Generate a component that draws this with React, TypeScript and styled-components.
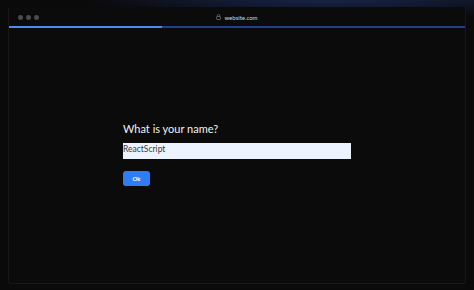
import React, { useState } from 'react';
import styled, { createGlobalStyle } from 'styled-components';

const GlobalStyle = createGlobalStyle`
  html, body {
    margin: 0;
    padding: 0;
    background: #0a0a0b;
  }
  * {
    box-sizing: border-box;
  }
`;

const App: React.FC = () => {
  const [name, setName] = useState('ReactScript');
  const progress = 33.5;

  return (
    <>
      <GlobalStyle />
      <Stage>
        <BrowserWindow>
          <TitleBar>
            <Dots>
              <Dot />
              <Dot />
              <Dot />
            </Dots>
            <Address>
              <LockIcon viewBox="0 0 10 12">
                <path d="M2.5 5V3.5a2.5 2.5 0 0 1 5 0V5" fill="none" stroke="#8a8a8a" strokeWidth="1.2" />
                <rect x="1.2" y="5" width="7.6" height="6" rx="1" fill="none" stroke="#8a8a8a" strokeWidth="1.2" />
              </LockIcon>
              website.com
            </Address>
          </TitleBar>
          <ProgressTrack>
            <ProgressFill style={{ width: `${progress}%` }} />
          </ProgressTrack>
          <Content>
            <Form onSubmit={(e) => e.preventDefault()}>
              <Question>What is your name?</Question>
              <NameInput value={name} onChange={(e) => setName(e.target.value)} />
              <OkButton type="submit">Ok</OkButton>
            </Form>
          </Content>
        </BrowserWindow>
      </Stage>
    </>
  );
};

const Stage = styled.div`
  width: 474px;
  height: 290px;
  padding: 7px 8px 6px 8px;
  background:
    radial-gradient(ellipse 260px 30px at 330px -8px, rgba(40, 70, 150, 0.55), rgba(10, 10, 11, 0) 100%),
    #0a0a0b;
  font-family: Lato, 'Open Sans', sans-serif;
`;

const BrowserWindow = styled.div`
  height: 100%;
  display: flex;
  flex-direction: column;
  background: #0b0b0c;
  border: 1px solid #18181a;
  border-top-color: #0b0b0c;
  border-radius: 3px;
`;

const TitleBar = styled.div`
  height: 18px;
  display: flex;
  align-items: center;
  position: relative;
  padding: 0 9px;
`;

const Dots = styled.div`
  display: flex;
  gap: 3px;
`;

const Dot = styled.span`
  width: 5px;
  height: 5px;
  border-radius: 50%;
  background: #4a4a4d;
`;

const Address = styled.div`
  position: absolute;
  left: 0;
  right: 0;
  font-size: 6px;
  color: #d6d6d8;
  display: flex;
  justify-content: center;
  align-items: center;
  gap: 3px;
`;

const LockIcon = styled.svg`
  width: 5px;
  height: 6px;
`;

const ProgressTrack = styled.div`
  height: 2px;
  background: #233d8f;
`;

const ProgressFill = styled.div`
  height: 100%;
  background: #4a8df0;
`;

const Content = styled.div`
  flex: 1;
  display: flex;
  align-items: center;
  justify-content: center;
  padding-bottom: 4px;
`;

const Form = styled.form`
  width: 228px;
  display: flex;
  flex-direction: column;
  align-items: flex-start;
`;

const Question = styled.h2`
  margin: 0 0 8px 0;
  font-size: 11px;
  line-height: 13px;
  font-weight: 400;
  color: #f2f2f2;
`;

const NameInput = styled.input`
  width: 100%;
  height: 16px;
  padding: 0 0 4px 0;
  border: none;
  outline: none;
  background: #eef4ff;
  color: #3a3a3a;
  font-family: Lato, 'Open Sans', sans-serif;
  font-size: 8.5px;
`;

const OkButton = styled.button`
  margin-top: 12px;
  width: 27px;
  height: 15px;
  border: none;
  border-radius: 3px;
  background: #2f7df6;
  color: #fff;
  font-family: Lato, 'Open Sans', sans-serif;
  font-size: 6px;
  font-weight: 700;
  padding: 0;
  cursor: pointer;
`;

export default App;
